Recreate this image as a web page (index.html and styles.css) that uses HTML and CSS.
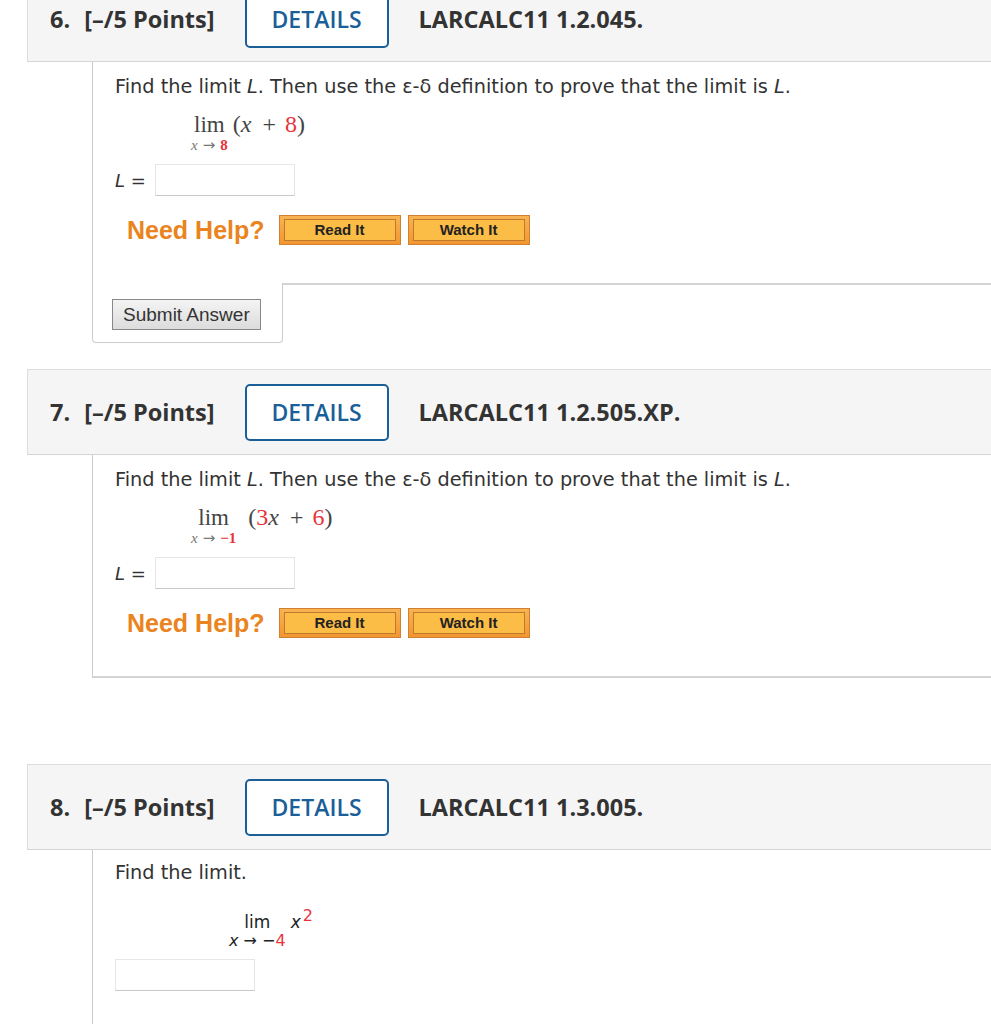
FILE: index.html
```html
<!DOCTYPE html>
<html lang="en">
<head>
    <meta charset="UTF-8">
    <meta name="viewport" content="width=device-width, initial-scale=1.0">
    <title>Assignment</title>
    <link rel="stylesheet" href="styles.css">
</head>
<body>

<div class="page">

<section class="question">
    <div class="q-head">
        <span class="q-num">6.</span>
        <span class="q-points">[–/5 Points]</span>
        <button class="details">DETAILS</button>
        <span class="q-ref">LARCALC11 1.2.045.</span>
    </div>
    <div class="q-body">
        <p class="prompt">Find the limit <i>L</i>. Then use the ε-δ definition to prove that the limit is <i>L</i>.</p>
        <div class="math">
            <span class="lim">
                <span class="lim-word">lim</span>
                <span class="lim-sub"><i>x</i><span class="arrow">→</span><b class="red">8</b></span>
            </span>
            <span class="expr">(<i>x</i><span class="op">+</span><span class="red">8</span>)</span>
        </div>
        <div class="answer">
            <span class="answer-label"><i>L</i> =</span>
            <input class="answer-box" type="text">
        </div>
        <div class="help">
            <span class="help-label">Need Help?</span>
            <button class="help-btn"><span>Read It</span></button>
            <button class="help-btn"><span>Watch It</span></button>
        </div>
    </div>
    <div class="submit-row">
        <div class="submit-tab">
            <button class="submit-btn">Submit Answer</button>
        </div>
        <div class="submit-rest"></div>
    </div>
</section>

<section class="question">
    <div class="q-head">
        <span class="q-num">7.</span>
        <span class="q-points">[–/5 Points]</span>
        <button class="details">DETAILS</button>
        <span class="q-ref">LARCALC11 1.2.505.XP.</span>
    </div>
    <div class="q-body q-body-closed">
        <p class="prompt">Find the limit <i>L</i>. Then use the ε-δ definition to prove that the limit is <i>L</i>.</p>
        <div class="math">
            <span class="lim">
                <span class="lim-word">lim</span>
                <span class="lim-sub"><i>x</i><span class="arrow">→</span><b class="red">−1</b></span>
            </span>
            <span class="expr expr-far">(<span class="red">3</span><i>x</i><span class="op">+</span><span class="red">6</span>)</span>
        </div>
        <div class="answer">
            <span class="answer-label"><i>L</i> =</span>
            <input class="answer-box" type="text">
        </div>
        <div class="help">
            <span class="help-label">Need Help?</span>
            <button class="help-btn"><span>Read It</span></button>
            <button class="help-btn"><span>Watch It</span></button>
        </div>
    </div>
</section>

<section class="question question-far">
    <div class="q-head">
        <span class="q-num">8.</span>
        <span class="q-points">[–/5 Points]</span>
        <button class="details">DETAILS</button>
        <span class="q-ref">LARCALC11 1.3.005.</span>
    </div>
    <div class="q-body q-body-open">
        <p class="prompt">Find the limit.</p>
        <div class="math-sans">
            <span class="lim">
                <span class="lim-word">lim</span>
                <span class="lim-sub"><i>x</i> → −<span class="red">4</span></span>
            </span>
            <span class="power"><i>x</i><sup class="red">2</sup></span>
        </div>
        <input class="answer-box answer-wide" type="text">
    </div>
</section>

</div>

</body>
</html>
```

FILE: styles.css
```css
body {
    margin: 0;
    background: #fff;
    color: #333;
    font-family: "DejaVu Sans", Verdana, sans-serif;
    overflow: hidden;
}
.page {
    margin-top: -24px;
    padding-left: 27px;
}
.question + .question {
    margin-top: 26px;
}
.question.question-far {
    margin-top: 86px;
}
.q-head {
    display: flex;
    align-items: center;
    height: 84px;
    padding-left: 22px;
    background: #f5f5f5;
    border: 1px solid #dddddd;
    border-bottom-color: #d4d4d4;
    border-right: none;
    font-family: "Open Sans", sans-serif;
    font-size: 23.5px;
    font-weight: bold;
    color: #333;
}
.q-num {
    margin-right: 14px;
}
.q-points {
    margin-right: 30px;
}
.details {
    height: 57px;
    padding: 0 25px;
    margin-right: 30px;
    background: #fff;
    border: 2px solid #1a5f98;
    border-radius: 5px;
    font-family: "Open Sans", sans-serif;
    font-size: 23px;
    font-weight: 600;
    color: #1a5f98;
}
.q-body {
    margin-left: 65px;
    padding: 14px 22px 38px;
    border-left: 1px solid #cccccc;
}
.q-body-closed {
    border-bottom: 2px solid #d4d4d4;
}
.q-body-open {
    padding-top: 12px;
    height: 400px;
}
.prompt {
    margin: 0;
    font-size: 19.3px;
    line-height: 22px;
}
.math {
    display: flex;
    align-items: baseline;
    margin: 13px 0 0 76px;
    font-family: "Liberation Serif", serif;
    color: #444;
}
.lim {
    display: inline-flex;
    flex-direction: column;
    align-items: center;
}
.lim-word {
    font-size: 23px;
    line-height: 26px;
}
.lim-sub {
    font-size: 15px;
    line-height: 15px;
    color: #777;
}
.arrow {
    margin: 0 5px;
    font-family: "DejaVu Sans", sans-serif;
    font-size: 15px;
}
.expr {
    font-size: 24px;
    line-height: 26px;
    margin-left: 5px;
}
.expr i {
    margin-right: 2px;
}
.expr-far {
    margin-left: 12px;
}
.op {
    margin: 0 9px;
}
.red {
    color: #e8333b;
}
.answer {
    display: flex;
    align-items: center;
    margin-top: 11px;
}
.answer-label {
    width: 40px;
    font-size: 18px;
}
.answer-box {
    width: 140px;
    height: 32px;
    box-sizing: border-box;
    border: 1px solid #e6e6e6;
    border-bottom-color: #c8c8c8;
    background: #fff;
}
.answer-wide {
    margin-top: 9px;
}
.help {
    display: flex;
    align-items: center;
    margin-top: 19px;
    padding-left: 12px;
}
.help-label {
    margin-right: 14px;
    font-family: "Liberation Sans", Arial, sans-serif;
    font-size: 25px;
    font-weight: bold;
    color: #ea8420;
}
.help-btn {
    width: 122px;
    height: 30px;
    margin-right: 7px;
    padding: 3px 4px;
    background: linear-gradient(#f8b352, #f29630);
    border: 1px solid #d0802e;
}
.help-btn span {
    display: block;
    height: 100%;
    box-sizing: border-box;
    border: 1px solid #c07a30;
    background: #fbbd46;
    font-family: "Liberation Sans", Arial, sans-serif;
    font-size: 15px;
    font-weight: bold;
    line-height: 20px;
    color: #222;
}
.submit-row {
    display: flex;
    margin-left: 65px;
}
.submit-tab {
    width: 170px;
    padding: 16px 0 12px 19px;
    border: 1px solid #cccccc;
    border-top: none;
    border-radius: 0 0 4px 4px;
}
.submit-btn {
    height: 31px;
    padding: 0 10px;
    background: linear-gradient(#f4f4f4, #dcdcdc);
    border: 1px solid #888;
    font-family: "Liberation Sans", Arial, sans-serif;
    font-size: 19px;
    color: #333;
}
.submit-rest {
    flex: 1;
    border-top: 2px solid #d4d4d4;
}
.math-sans {
    display: flex;
    align-items: baseline;
    margin: 28px 0 0 114px;
    color: #222;
}
.math-sans .lim-word {
    font-size: 17px;
    line-height: 20px;
}
.math-sans .lim-sub {
    font-size: 16px;
    line-height: 18px;
    color: #222;
}
.power {
    margin-left: 5px;
    font-size: 17px;
    line-height: 20px;
}
.power i {
    margin-right: 2px;
}
.power sup {
    font-size: 16px;
    line-height: 0;
}
```
